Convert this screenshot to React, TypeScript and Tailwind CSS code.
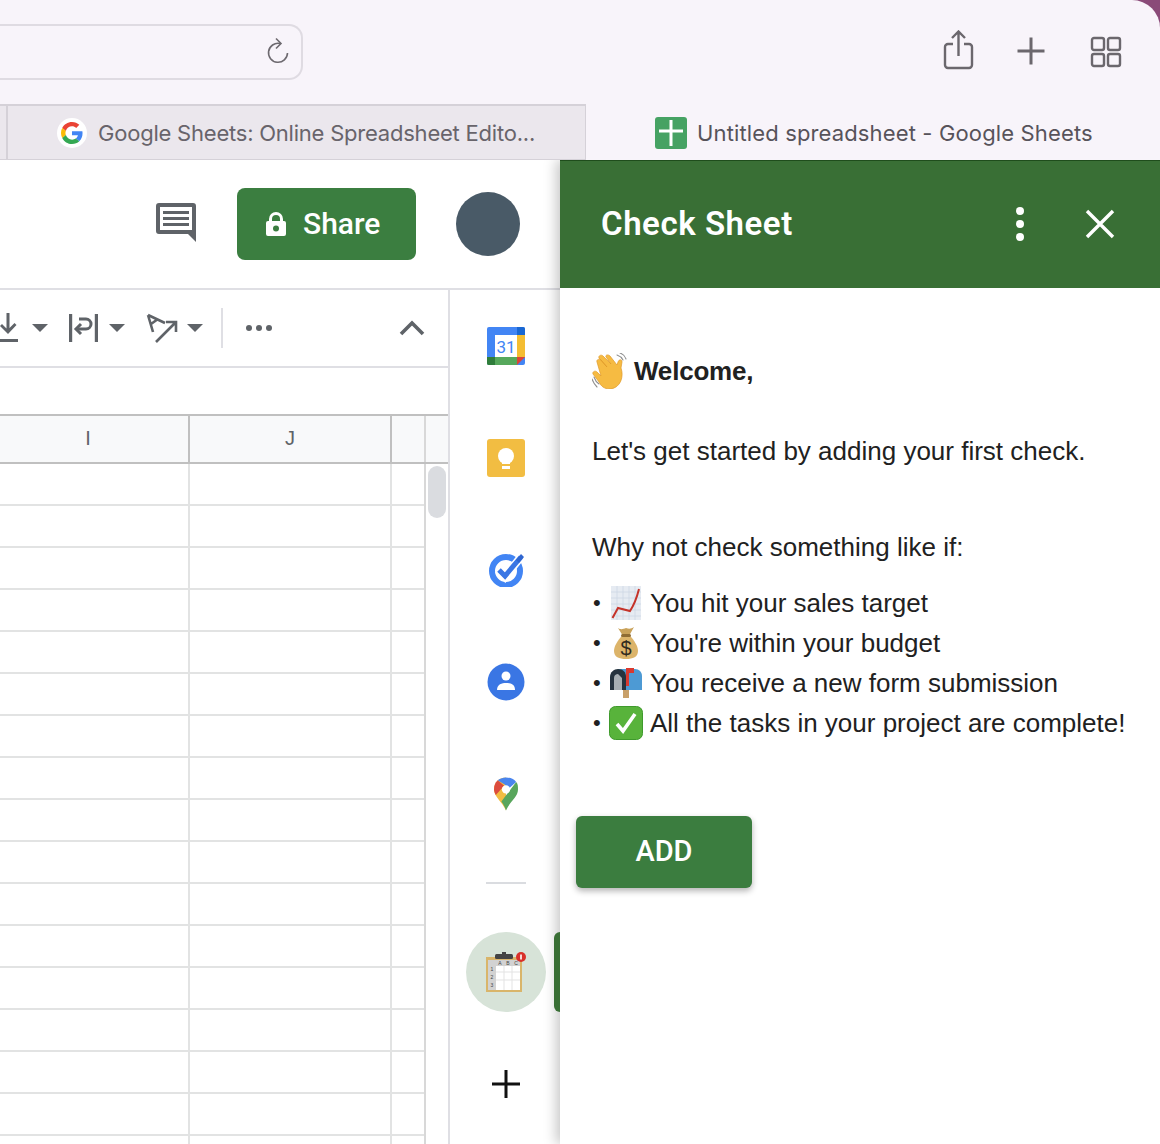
import React from "react";

const rows = Array.from({ length: 17 }, (_, i) => i);

function Caret() {
  return (
    <svg width="16" height="8" viewBox="0 0 16 8" className="shrink-0">
      <path d="M0 0h16L8 8z" fill="#5f6368" />
    </svg>
  );
}

function Wave() {
  return (
    <svg width="36" height="36" viewBox="0 0 36 36" className="shrink-0">
      <path d="M2 24c1 3 2 5 5 7M0 26c1 3 3 6 5 8M25 2c3 1 5 3 6 5M28 0c3 1 5 3 6 6" fill="none" stroke="#8f8f8f" strokeWidth="1.100" strokeLinecap="round" />
      <path d="M5 9c-1-2 2-4 4-2l6 7-8-9c-1-2 2-4 4-2l8 8-5-7c-1-2 2-3 4-1l7 9 1-3c1-3 4-3 4 0l-1 6c3 8 0 20-11 21-6 0-9-3-11-7l-6-8c-1-2 2-4 4-2l4 4z" fill="#f6bb42" stroke="#e09a2a" strokeWidth="0.700" />
    </svg>
  );
}

function Chart() {
  return (
    <svg width="30" height="34" viewBox="0 0 30 34" className="shrink-0">
      <rect x="0" y="0" width="30" height="34" fill="#e6ebf2" />
      <path d="M0 6h30M0 12h30M0 18h30M0 24h30M0 30h30M6 0v34M12 0v34M18 0v34M24 0v34" stroke="#cdd7e4" strokeWidth="0.800" />
      <path d="M1.500 32L7 22l12 3c4-6 7-14 9-22" fill="none" stroke="#c5332a" strokeWidth="2" />
    </svg>
  );
}

function Bag() {
  return (
    <svg width="24" height="32" viewBox="0 0 24 32" className="shrink-0">
      <path d="M4 1c3 2 5 1 8 0 3 1 5 1 8-1l-5 9H9z" fill="#c9a25a" />
      <path d="M8 9c-4 4-8 10-8 15 0 6 5 8 12 8s12-2 12-8c0-5-4-11-8-15z" fill="#dcb46a" />
      <rect x="7" y="7" width="10" height="3" rx="1.500" fill="#8f6c33" />
      <text x="12" y="28" textAnchor="middle" fontSize="20" fontFamily="'Liberation Sans', sans-serif" fill="#2f2a20">$</text>
    </svg>
  );
}

function Mailbox() {
  return (
    <svg width="32" height="30" viewBox="0 0 32 30" className="shrink-0">
      <rect x="13" y="21" width="6" height="9" fill="#c8a06a" />
      <path d="M8 1h17c4 0 7 3 7 7v14H8z" fill="#4d9ad4" />
      <path d="M8 1c5 0 8 3 8 8v13H0V9c0-5 4-8 8-8z" fill="#26333e" />
      <path d="M4 22V10c0-3 2-4 4-4l4 4v12z" fill="#a7aeb2" />
      <rect x="16" y="4" width="3" height="14" fill="#d9392f" />
      <rect x="16" y="0" width="8" height="5" fill="#d9392f" />
    </svg>
  );
}

function Check() {
  return (
    <svg width="34" height="34" viewBox="0 0 34 34" className="shrink-0">
      <rect x="0.500" y="0.500" width="33" height="33" rx="6" fill="#58b33b" stroke="#3f9a2c" />
      <path d="M8 18l6 7L26 8" fill="none" stroke="#fff" strokeWidth="3.600" />
    </svg>
  );
}

function ListRow({ icon, text }: { icon: React.ReactNode; text: string }) {
  return (
    <div className="flex h-[40px] items-center">
      <span className="ml-[1px] w-[11px] shrink-0 text-[22px] leading-none">•</span>
      <span className="mr-[2px] flex w-[44px] shrink-0 items-center justify-center">{icon}</span>
      <span className="whitespace-nowrap">{text}</span>
    </div>
  );
}

export default function App() {
  return (
    <div className="relative flex h-[1144px] w-[1160px] flex-col overflow-hidden bg-[#8a4a78] font-['Liberation_Sans',sans-serif]">
      <div className="flex h-[104px] shrink-0 items-start rounded-tr-[28px] bg-[#f8f4fa]">
        <div className="mt-[24px] flex h-[56px] w-[303px] items-center justify-end rounded-r-[14px] border-2 border-l-0 border-[#dfdbe2] pr-[10px]">
          <svg width="26" height="30" viewBox="0 0 26 30" fill="none" stroke="#6d696f" strokeWidth="1.600">
            <path d="M15 6.500A9.500 9.500 0 1 0 22.500 16" />
            <path d="M11 1.500l5 5-5 5" />
          </svg>
        </div>
        <svg className="ml-[640px] mt-[30px]" width="32" height="40" viewBox="0 0 32 40" fill="none" stroke="#6b676d" strokeWidth="2.400">
          <path d="M10 14H5a3 3 0 0 0-3 3v18a3 3 0 0 0 3 3h21a3 3 0 0 0 3-3V17a3 3 0 0 0-3-3h-5" />
          <path d="M15.500 26V2M9 8l6.500-6.500L22 8" />
        </svg>
        <svg className="ml-[41px] mt-[36px]" width="30" height="30" viewBox="0 0 30 30" fill="none" stroke="#6b676d" strokeWidth="3">
          <path d="M15 1.500v27M1.500 15h27" />
        </svg>
        <svg className="ml-[44px] mt-[36px]" width="32" height="32" viewBox="0 0 32 32" fill="none" stroke="#6b676d" strokeWidth="2.400">
          <rect x="2" y="2" width="12" height="12" rx="2" />
          <rect x="18" y="2" width="12" height="12" rx="2" />
          <rect x="2" y="18" width="12" height="12" rx="2" />
          <rect x="18" y="18" width="12" height="12" rx="2" />
        </svg>
      </div>

      <div className="relative z-20 flex h-[56px] shrink-0 bg-[#f8f4fa] font-['Inter',sans-serif] text-[22px]">
        <div className="flex h-full w-[586px] items-center border-r border-t-2 border-b border-[#d5d1d8] bg-[#ebe7ed] text-[#68646b]">
          <div className="h-full w-[8px] border-r-2 border-[#d5d1d8]" />
          <span className="ml-[49px] flex h-[30px] w-[30px] shrink-0 items-center justify-center rounded-full bg-white">
            <svg width="22" height="22" viewBox="0 0 48 48">
              <path fill="#EA4335" d="M24 9.500c3.500 0 6.700 1.300 9.200 3.500l6.800-6.800C35.900 2.400 30.500 0 24 0 14.600 0 6.500 5.400 2.600 13.200l7.900 6.200C12.400 13.700 17.700 9.500 24 9.500z" />
              <path fill="#4285F4" d="M47 24.500c0-1.600-.1-3.100-.4-4.500H24v9h12.900c-.6 3-2.300 5.500-4.800 7.200l7.700 6C44.300 38 47 31.800 47 24.500z" />
              <path fill="#FBBC05" d="M10.500 28.600c-.5-1.400-.8-3-.8-4.600s.3-3.200.8-4.600l-7.900-6.200C1 16.500 0 20.100 0 24s1 7.500 2.600 10.800z" />
              <path fill="#34A853" d="M24 48c6.500 0 11.900-2.100 15.900-5.800l-7.700-6c-2.200 1.400-4.900 2.300-8.100 2.300-6.300 0-11.600-4.200-13.500-10l-7.900 6.200C6.500 42.600 14.600 48 24 48z" />
            </svg>
          </span>
          <span className="ml-[11px] mt-[1px] whitespace-nowrap tracking-[-0.22px]">Google Sheets: Online Spreadsheet Edito...</span>
        </div>
        <div className="flex h-full flex-1 items-center pt-[2px] text-[#57535a]">
          <span className="ml-[69px] flex h-[32px] w-[32px] shrink-0 items-center justify-center rounded-[3px] bg-[#46a263]">
            <svg width="24" height="26" viewBox="0 0 24 26" fill="#fff">
              <path d="M10.500 0h3v9.500H24v3H13.500V26h-3V12.500H0v-3h10.500z" />
            </svg>
          </span>
          <span className="ml-[10px] whitespace-nowrap tracking-[0.14px]">Untitled spreadsheet - Google Sheets</span>
        </div>
      </div>

      <div className="flex min-h-0 flex-1 bg-white">
        <div className="flex w-[560px] shrink-0 flex-col">
          <div className="flex h-[130px] shrink-0 items-start border-b-2 border-[#dfdfe4]">
            <svg className="ml-[156px] mt-[43px]" width="40" height="39" viewBox="0 0 40 39">
              <path d="M3 0h34a3 3 0 0 1 3 3v36l-8-8H3a3 3 0 0 1-3-3V3a3 3 0 0 1 3-3z" fill="#5f6368" />
              <rect x="4" y="4" width="32" height="23" fill="#fff" />
              <path d="M7 8h26v3H7zM7 14h26v3H7zM7 20h26v3H7z" fill="#5f6368" />
            </svg>
            <button className="ml-[41px] mt-[28px] flex h-[72px] w-[179px] items-center rounded-[8px] bg-[#3b7e40] pb-[2px] pl-[29px] font-['Roboto',sans-serif] text-[30px] font-medium text-white">
              <svg width="20" height="24" viewBox="0 0 20 24" className="mt-[2px] shrink-0">
                <path d="M3 9V7a7 7 0 0 1 14 0v2h1a2 2 0 0 1 2 2v11a2 2 0 0 1-2 2H2a2 2 0 0 1-2-2V11a2 2 0 0 1 2-2zm3 0h8V7a4 4 0 0 0-8 0z" fill="#fff" fillRule="evenodd" />
                <circle cx="10" cy="16.500" r="3" fill="#3b7e40" />
              </svg>
              <span className="ml-[17px]">Share</span>
            </button>
            <div className="ml-[40px] mt-[32px] h-[64px] w-[64px] rounded-full bg-[#495a67]" />
          </div>

          <div className="flex min-h-0 flex-1">
            <div className="flex w-[450px] shrink-0 flex-col overflow-hidden border-r-2 border-[#dfdfe4]">
              <div className="flex h-[78px] shrink-0 items-center border-b-2 border-[#dfdfe4]">
                <svg className="shrink-0" width="18" height="30" viewBox="0 0 18 30" fill="#5f6368">
                  <path d="M0 26h18v3H0zM6.500 0h3v15l5-5 2 2-8.500 9-8-8 2-2 4.500 4.500z" />
                </svg>
                <span className="ml-[14px] shrink-0"><Caret /></span>
                <svg className="ml-[21px] shrink-0" width="29" height="28" viewBox="0 0 29 28" fill="none" stroke="#5f6368">
                  <path d="M1.500 0v28M27.500 0v28" strokeWidth="3.400" />
                  <path d="M7 15h10a5 5 0 0 0 0-10h-7" strokeWidth="3" />
                  <path d="M12 10l-5 5 5 5" strokeWidth="3" />
                </svg>
                <span className="ml-[11px] shrink-0"><Caret /></span>
                <svg className="ml-[21px] shrink-0" width="32" height="30" viewBox="0 0 32 30" fill="none" stroke="#5f6368" strokeWidth="2.600">
                  <path d="M2 2l5 17M2 2l17 8M5 11l7-5" />
                  <path d="M10 29L30 9M20 9h10v10" />
                </svg>
                <span className="ml-[9px] shrink-0"><Caret /></span>
                <div className="ml-[18px] h-[40px] w-[2px] shrink-0 bg-[#dfdfe4]" />
                <div className="ml-[23px] flex shrink-0 gap-[4px]">
                  <span className="h-[6px] w-[6px] rounded-full bg-[#5f6368]" />
                  <span className="h-[6px] w-[6px] rounded-full bg-[#5f6368]" />
                  <span className="h-[6px] w-[6px] rounded-full bg-[#5f6368]" />
                </div>
                <svg className="ml-[127px] shrink-0" width="26" height="16" viewBox="0 0 26 16" fill="none" stroke="#5f6368" strokeWidth="3.600">
                  <path d="M2 14L13 3l11 11" />
                </svg>
              </div>
              <div className="h-[46px] shrink-0" />
              <div className="flex h-[50px] shrink-0 border-y-2 border-[#c0c0c0] bg-[#f8f9fa] pb-[3px] font-['Liberation_Sans',sans-serif] text-[20px] text-[#5f6368]">
                <div className="-mb-[3px] flex w-[190px] items-center justify-center border-r-2 border-[#c0c0c0] pb-[3px]"><span className="mr-[12px]">I</span></div>
                <div className="-mb-[3px] flex w-[202px] items-center justify-center border-r-2 border-[#c0c0c0] pb-[3px]">J</div>
                <div className="-mb-[3px] w-[34px] border-r-2 border-[#d8d8d8]" />
              </div>
              <div className="flex min-h-0 flex-1">
                <div className="w-[426px] shrink-0 border-r-2 border-[#d8d8d8]">
                  {rows.map((r) => (
                    <div key={r} className="flex h-[42px] border-b-2 border-[#e2e3e3]">
                      <div className="w-[190px] border-r-2 border-[#e2e3e3]" />
                      <div className="w-[202px] border-r-2 border-[#e2e3e3]" />
                    </div>
                  ))}
                </div>
                <div className="flex-1 pl-[2px] pt-[2px]">
                  <div className="h-[52px] w-[18px] rounded-full bg-[#dadce0]" />
                </div>
              </div>
            </div>

            <div className="flex w-[110px] shrink-0 flex-col items-center pl-[2px]">
              <div className="flex h-[112px] w-full items-center justify-center">
                <svg width="38" height="38" viewBox="0 0 38 38">
                  <rect x="0" y="0" width="38" height="38" rx="2" fill="#4285f4" />
                  <path d="M30 0h6a2 2 0 0 1 2 2v6h-8z" fill="#1967d2" />
                  <rect x="30" y="8" width="8" height="22" fill="#f4bd32" />
                  <path d="M0 30h30v8H2a2 2 0 0 1-2-2z" fill="#56a85c" />
                  <path d="M0 30h8v8H2a2 2 0 0 1-2-2z" fill="#2f7d3b" />
                  <path d="M30 30h8l-8 8z" fill="#dc4437" />
                  <rect x="8" y="8" width="22" height="22" fill="#fff" />
                  <text x="19" y="26" textAnchor="middle" fontSize="17" fontFamily="Roboto, sans-serif" fill="#4285f4">31</text>
                </svg>
              </div>
              <div className="flex h-[112px] w-full items-center justify-center">
                <svg width="38" height="38" viewBox="0 0 38 38">
                  <rect width="38" height="38" rx="3" fill="#f2bd42" />
                  <circle cx="19" cy="17" r="8" fill="#fff" />
                  <rect x="15" y="22" width="8" height="3" fill="#fff" />
                  <rect x="15" y="27" width="8" height="3" fill="#fff" />
                </svg>
              </div>
              <div className="flex h-[112px] w-full items-center justify-center pb-[2px]">
                <svg width="38" height="36" viewBox="0 0 38 36">
                  <circle cx="19" cy="20" r="14" fill="none" stroke="#4285f4" strokeWidth="6" />
                  <path d="M11 19l7 7L33 7" fill="none" stroke="#fff" strokeWidth="8" />
                  <path d="M12 19l6 6L34 6" fill="none" stroke="#3a76e4" strokeWidth="5" />
                  <path d="M29 9l5-6 3 3-5 6z" fill="#2f66d0" />
                </svg>
              </div>
              <div className="flex h-[112px] w-full items-center justify-center">
                <svg width="38" height="38" viewBox="0 0 38 38">
                  <circle cx="19" cy="19" r="18.500" fill="#3a76e4" />
                  <circle cx="19" cy="13" r="4.500" fill="#fff" />
                  <path d="M10 27c0-6 5-7 9-7s9 1 9 7z" fill="#fff" />
                </svg>
              </div>
              <div className="flex h-[112px] w-full items-center justify-center">
                <svg width="24" height="34" viewBox="0 0 26 36">
                  <path d="M13 0C5 0 0 6 0 13c0 8 9 13 13 23z" fill="#f2bd42" />
                  <path d="M4 3C1 6 0 9 0 13c0 2 1 4 2 6l9-10z" fill="#dc4c3e" />
                  <path d="M4 3c3-2 6-3 9-3 5 0 9 2 11 5L15 13l-3-5z" fill="#4a85ee" />
                  <path d="M24 5c2 2 2 5 2 8 0 8-9 13-13 23-1-4-3-7-5-10z" fill="#58a65c" />
                  <circle cx="13" cy="13" r="4.500" fill="#fff" />
                </svg>
              </div>
              <div className="mt-[32px] h-[2px] w-[40px] bg-[#dadce0]" />
              <div className="mt-[48px] flex h-[80px] w-[80px] items-center justify-center rounded-full bg-[#d7e3d8]">
                <svg width="40" height="40" viewBox="0 0 40 40">
                  <rect x="0" y="5" width="36" height="35" fill="#d9b56b" />
                  <rect x="2" y="8" width="32" height="30" fill="#fff" />
                  <rect x="2" y="8" width="32" height="6" fill="#d2d2d2" />
                  <rect x="2" y="8" width="8" height="30" fill="#d2d2d2" />
                  <path d="M10 20h24M10 28h24M18 14v24M26 14v24" stroke="#e3e3e3" />
                  <text x="14" y="13" textAnchor="middle" fontSize="5" fontFamily="'Liberation Sans', sans-serif" fill="#444">A</text>
                  <text x="22" y="13" textAnchor="middle" fontSize="5" fontFamily="'Liberation Sans', sans-serif" fill="#444">B</text>
                  <text x="30" y="13" textAnchor="middle" fontSize="5" fontFamily="'Liberation Sans', sans-serif" fill="#444">C</text>
                  <text x="6" y="19" textAnchor="middle" fontSize="5" fontFamily="'Liberation Sans', sans-serif" fill="#444">1</text>
                  <text x="6" y="27" textAnchor="middle" fontSize="5" fontFamily="'Liberation Sans', sans-serif" fill="#444">2</text>
                  <text x="6" y="35" textAnchor="middle" fontSize="5" fontFamily="'Liberation Sans', sans-serif" fill="#444">3</text>
                  <rect x="9" y="2" width="18" height="5" rx="1.500" fill="#444" />
                  <rect x="16" y="0" width="4" height="3" fill="#444" />
                  <circle cx="35" cy="5" r="5" fill="#d9302a" />
                  <rect x="34.200" y="2.500" width="1.600" height="5" fill="#fff" />
                </svg>
              </div>
              <div className="mt-[42px] flex h-[60px] items-center justify-center">
                <svg width="28" height="28" viewBox="0 0 28 28" stroke="#111" strokeWidth="3">
                  <path d="M14 0v28M0 14h28" />
                </svg>
              </div>
            </div>
          </div>
        </div>

        <div className="relative z-10 flex w-[600px] flex-col bg-white shadow-[-4px_0_12px_rgba(0,0,0,0.22)]">
          <div className="absolute -left-[6px] top-[772px] h-[80px] w-[6px] rounded-l-[8px] bg-[#396f35]" />
          <div className="flex h-[128px] shrink-0 items-center border-t border-[#1f4d1c] bg-[#396f35] pb-[1px] pl-[41px] text-white">
            <span className="w-[415px] whitespace-nowrap font-['Roboto',sans-serif] text-[33px] font-semibold tracking-[0.55px]">Check Sheet</span>
            <div className="flex flex-col gap-[5px]">
              <span className="h-[8px] w-[8px] rounded-full bg-white" />
              <span className="h-[8px] w-[8px] rounded-full bg-white" />
              <span className="h-[8px] w-[8px] rounded-full bg-white" />
            </div>
            <svg className="ml-[61px]" width="30" height="30" viewBox="0 0 30 30" stroke="#fff" strokeWidth="3.400">
              <path d="M2 2l26 26M28 2L2 28" />
            </svg>
          </div>
          <div className="flex flex-1 flex-col pl-[32px] text-[26px] text-[#212121]">
            <div className="mt-[63px] flex h-[40px] items-center gap-[6px]">
              <Wave />
              <span className="font-bold tracking-[-0.2px]">Welcome,</span>
            </div>
            <div className="mt-[40px] flex h-[40px] items-center whitespace-nowrap">Let's get started by adding your first check.</div>
            <div className="mt-[56px] flex h-[40px] items-center whitespace-nowrap">Why not check something like if:</div>
            <div className="mt-[16px] flex flex-col">
              <ListRow icon={<Chart />} text="You hit your sales target" />
              <ListRow icon={<Bag />} text="You're within your budget" />
              <ListRow icon={<Mailbox />} text="You receive a new form submission" />
              <ListRow icon={<Check />} text="All the tasks in your project are complete!" />
            </div>
            <button className="-ml-[16px] mt-[73px] h-[72px] w-[176px] rounded-[6px] bg-[#3b7d3f] font-['Roboto',sans-serif] text-[29px] font-medium text-white shadow-[0_3px_6px_rgba(0,0,0,0.3)]">
              ADD
            </button>
          </div>
        </div>
      </div>
    </div>
  );
}
